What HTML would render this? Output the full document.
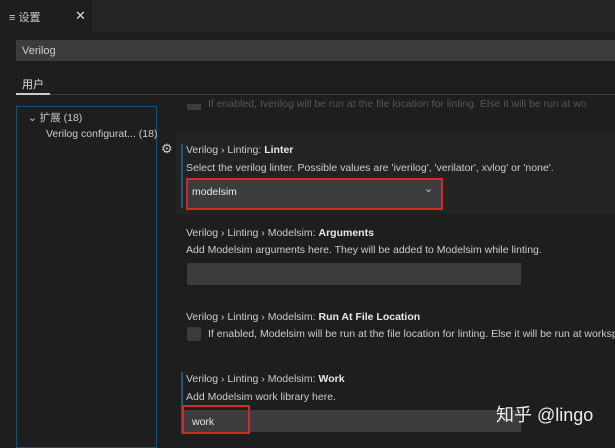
<!DOCTYPE html>
<html><head><style>
body{margin:0;width:615px;height:443px;background:#1e1e1e;font-family:"Liberation Sans","Noto Sans CJK SC",sans-serif;color:#ccc;overflow:hidden;position:relative;font-size:11px}
.a{position:absolute}
.t{font-size:10.5px;color:#ccc;white-space:nowrap}
b{color:#e8e8e8}
</style></head><body>
<div class="a" style="left:0;top:0;width:615px;height:32px;background:#252526"></div>
<div class="a" style="left:0;top:0;width:92px;height:32px;background:#1e1e1e"></div>
<div class="a t" style="left:9px;top:9px;font-size:11px">≡ 设置</div>
<div class="a t" style="left:75px;top:8px;font-size:13px;color:#ddd">✕</div>
<div class="a" style="left:16px;top:40px;width:599px;height:21px;background:#3c3c3c"></div>
<div class="a t" style="left:22px;top:45px;font-size:11px;color:#ccc">Verilog</div>
<div class="a t" style="left:22px;top:76px;font-size:11px;color:#e0e0e0">用户</div>
<div class="a" style="left:16px;top:94px;width:599px;height:1px;background:#3a3a3a"></div>
<div class="a" style="left:16px;top:93px;width:34px;height:2px;background:#ccc"></div>
<div class="a" style="left:16px;top:106px;width:139px;height:340px;border:1px solid #1e4f6e"></div>
<div class="a t" style="left:28px;top:110px">⌄ 扩展 (18)</div>
<div class="a t" style="left:46px;top:128px">Verilog configurat... (18)</div>
<div class="a" style="left:187px;top:104px;width:14px;height:6px;background:#3c3c3c"></div>
<div class="a t" style="left:208px;top:98px;color:#555">If enabled, Iverilog will be run at the file location for linting. Else it will be run at wo</div>
<div class="a" style="left:176px;top:132px;width:439px;height:82px;background:#232323"></div>
<div class="a t" style="left:161px;top:141px;font-size:13px">⚙</div>
<div class="a" style="left:181px;top:144px;width:2px;height:64px;background:#1b5a6a"></div>
<div class="a t" style="left:186px;top:144px">Verilog › Linting: <b>Linter</b></div>
<div class="a t" style="left:186px;top:162px">Select the verilog linter. Possible values are 'iverilog', 'verilator', xvlog' or 'none'.</div>
<div class="a" style="left:186px;top:178px;width:253px;height:28px;background:#3c3c3c;border:2px solid #d12a2a"></div>
<div class="a t" style="left:192px;top:186px;color:#e8e8e8">modelsim</div>
<div class="a t" style="left:424px;top:182px;font-size:11px">⌄</div>
<div class="a t" style="left:186px;top:227px">Verilog › Linting › Modelsim: <b>Arguments</b></div>
<div class="a t" style="left:186px;top:244px">Add Modelsim arguments here. They will be added to Modelsim while linting.</div>
<div class="a" style="left:187px;top:263px;width:334px;height:22px;background:#3c3c3c"></div>
<div class="a t" style="left:186px;top:311px">Verilog › Linting › Modelsim: <b>Run At File Location</b></div>
<div class="a" style="left:187px;top:327px;width:14px;height:14px;background:#3c3c3c;border-radius:2px"></div>
<div class="a t" style="left:208px;top:328px">If enabled, Modelsim will be run at the file location for linting. Else it will be run at worksp</div>
<div class="a" style="left:181px;top:372px;width:2px;height:62px;background:#1b5a6a"></div>
<div class="a t" style="left:186px;top:373px">Verilog › Linting › Modelsim: <b>Work</b></div>
<div class="a t" style="left:186px;top:391px">Add Modelsim work library here.</div>
<div class="a" style="left:183px;top:410px;width:338px;height:22px;background:#3c3c3c"></div>
<div class="a" style="left:182px;top:405px;width:64px;height:25px;border:2px solid #d12a2a"></div>
<div class="a t" style="left:192px;top:416px;color:#e8e8e8">work</div>
<div class="a t" style="left:496px;top:401px;font-size:18px;color:#eee">知乎 @lingo</div>
</body></html>
